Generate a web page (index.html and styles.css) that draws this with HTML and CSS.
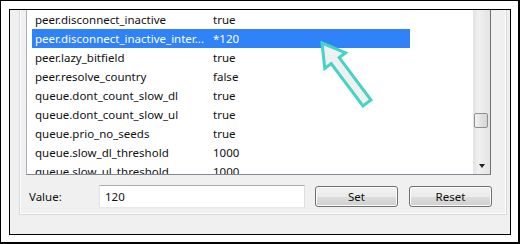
FILE: index.html
```html
<html lang="en">
  <head>
    <meta charset="utf-8">
    <title>Advanced Settings</title>
    <link rel="stylesheet" href="styles.css">
  </head>

  <body>
    <div class="outer">
      <div class="shot">
        <div class="group">
          <div class="list">
            <div class="rows">
              <div class="row"><span class="name">peer.disconnect_inactive</span><span class="value">true</span></div>
              <div class="row selected"><span class="name">peer.disconnect_inactive_inter...</span><span class="value">*120</span></div>
              <div class="row"><span class="name">peer.lazy_bitfield</span><span class="value">true</span></div>
              <div class="row"><span class="name">peer.resolve_country</span><span class="value">false</span></div>
              <div class="row"><span class="name">queue.dont_count_slow_dl</span><span class="value">true</span></div>
              <div class="row"><span class="name">queue.dont_count_slow_ul</span><span class="value">true</span></div>
              <div class="row"><span class="name">queue.prio_no_seeds</span><span class="value">true</span></div>
              <div class="row"><span class="name">queue.slow_dl_threshold</span><span class="value">1000</span></div>
              <div class="row"><span class="name">queue.slow_ul_threshold</span><span class="value">1000</span></div>
            </div>
            <div class="scrollbar">
              <div class="thumb"></div>
              <div class="down"><span class="tri"></span></div>
            </div>
          </div>

          <div class="edit">
            <label class="label" for="value">Value:</label>
            <input id="value" class="field" type="text" value="120">
            <button class="btn">Set</button>
            <button class="btn">Reset</button>
          </div>
        </div>
      </div>

      <!-- callout arrow -->
      <svg class="arrow" width="520" height="244" viewBox="0 0 520 244">
        <polygon points="322,43 345.6,52.8 339.2,57.6 371,100 363,106 331.2,63.6 324.8,68.4"
                 fill="#eef1ef" stroke="#45d3c4" stroke-width="3" stroke-linejoin="miter"/>
      </svg>
    </div>
  </body>
</html>
```

FILE: styles.css
```css
* {
  box-sizing: border-box;
}

body {
  margin: 0;
  background-color: #fff;
  font-family: "Noto Sans", "Open Sans", sans-serif;
  font-size: 11.5px;
  color: #111;
}

.outer {
  position: relative;
  width: 520px;
  height: 244px;
  border: 1px solid #000;
  border-right-width: 2px;
  border-bottom-width: 2px;
  padding: 8px 7px 7px 8px;
  overflow: hidden;
}

.shot {
  height: 100%;
  border: 1px solid #000;
  background-color: #f0f0f0;
  overflow: hidden;
}

.group {
  margin-left: 9px;
  width: 488px;
  border: 1px solid #d5d9dd;
  border-top: none;
  box-shadow: inset 1px 0 0 #fff, inset -1px -1px 0 #fff;
  padding: 0 15px 6px 6px;
}

.list {
  display: flex;
  height: 165px;
  background-color: #fff;
  border-right: 1px solid #6f7378;
  border-bottom: 1px solid #828790;
  border-left: 1px solid #aeb1b6;
  overflow: hidden;
}

.rows {
  flex: 1;
  padding-left: 5px;
}

.row {
  display: flex;
  width: 378px;
  height: 19px;
  line-height: 19px;
  white-space: nowrap;
}

.row.selected {
  background-color: #2f82f7;
  color: #fff;
}

.name {
  width: 177px;
  padding-left: 3px;
  overflow: hidden;
}

.value {
  flex: 1;
  padding-left: 4px;
}

.scrollbar {
  display: flex;
  flex-direction: column;
  width: 17px;
  background: linear-gradient(to right, #e2e2e2, #f1f1f1 35%, #e9e9e9 70%, #e4e4e4);
}

.thumb {
  margin: 103px 0 0 1px;
  width: 14px;
  height: 15px;
  border: 1px solid #8e8f8f;
  border-radius: 2px;
  background: linear-gradient(to right, #f4f4f4, #e2e2e2 50%, #d6d6d6);
}

.down {
  margin-top: auto;
  height: 17px;
  display: flex;
  align-items: center;
  justify-content: center;
}

.tri {
  width: 0;
  height: 0;
  border-left: 3.5px solid transparent;
  border-right: 3.5px solid transparent;
  border-top: 4px solid #222;
}

.edit {
  display: flex;
  align-items: center;
  margin-top: 9px;
  margin-right: -2px;
  height: 24px;
}

.label {
  flex: none;
  width: 73px;
  padding-left: 3px;
}

.field {
  flex: none;
  width: 206px;
  height: 23px;
  margin-right: 10px;
  padding: 0 5px;
  border: 1px solid;
  border-color: #abadb3 #dbdfe6 #e3e9ef #e2e3ea;
  font-family: inherit;
  font-size: 11.5px;
  color: #111;
  background-color: #fff;
}

.btn {
  flex: none;
  width: 83px;
  height: 21px;
  padding: 0;
  border: 1px solid #707070;
  border-radius: 3px;
  box-shadow: inset 0 0 0 1px #fcfcfc;
  background: linear-gradient(#f2f2f2 0%, #ebebeb 50%, #dddddd 51%, #cfcfcf 100%);
  font-family: inherit;
  font-size: 11.5px;
  color: #111;
}

.btn + .btn {
  margin-left: 11px;
}

.arrow {
  position: absolute;
  top: -1px;
  left: -1px;
  pointer-events: none;
}
```
